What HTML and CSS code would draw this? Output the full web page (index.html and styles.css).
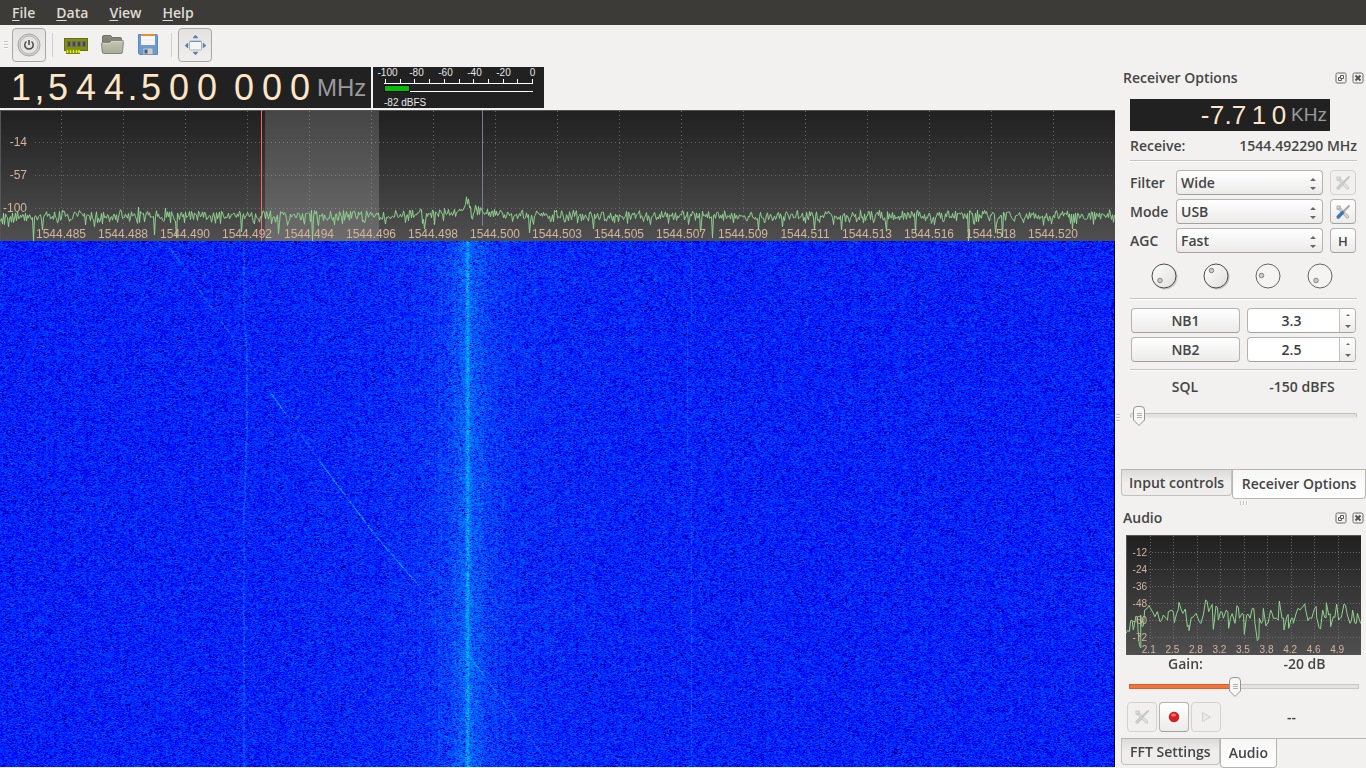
FILE: index.html
```html
<!DOCTYPE html>
<html lang="en">
<head>
<meta charset="utf-8">
<title>Receiver</title>
<link rel="stylesheet" href="styles.css">
</head>
<body>
<svg class="defs" aria-hidden="true">
  <symbol id="tools" viewBox="0 0 16 16">
    <path d="M3 3 L12.500 12.800" stroke="#a9aaa7" stroke-width="3.200" stroke-linecap="round"/>
    <path d="M3 3 L12.500 12.800" stroke="#dededb" stroke-width="1.600" stroke-linecap="round"/>
    <path d="M1.500 4.500 A3 3 0 0 0 5 5 A3 3 0 0 0 4.500 1.500" fill="none" stroke="#b3b5b1" stroke-width="1.600"/>
    <path d="M14 2 L7 9" stroke="#a7a9a5" stroke-width="2" stroke-linecap="round"/>
    <path d="M7.300 8.700 L3.200 13" stroke="currentColor" stroke-width="3.600" stroke-linecap="round"/>
  </symbol>
  <symbol id="float" viewBox="0 0 12 12">
    <rect x="1" y="1" width="10" height="10" rx="1.500" fill="none" stroke="#6b6963"/>
    <path d="M5.500 3.500 H8.500 V6.500 H5.500Z M5 5.500 H3.500 V8.500 H6.500 V7" fill="none" stroke="#5d5b56"/>
  </symbol>
  <symbol id="close" viewBox="0 0 12 12">
    <rect x="1" y="1" width="10" height="10" rx="1.500" fill="none" stroke="#6b6963"/>
    <path d="M3.500 3.500 L8.500 8.500 M8.500 3.500 L3.500 8.500" stroke="#55534e" stroke-width="2"/>
  </symbol>
  <linearGradient id="face" x1="0" y1="0" x2="1" y2="1"><stop offset="0" stop-color="#fff"/><stop offset="1" stop-color="#dfdedc"/></linearGradient>
  <linearGradient id="folderBack" x1="0" y1="0" x2="0" y2="1"><stop offset="0" stop-color="#8b8d7c"/><stop offset="1" stop-color="#6d705f"/></linearGradient>
  <linearGradient id="folderFront" x1="0" y1="0" x2="0" y2="1"><stop offset="0" stop-color="#c3c6b4"/><stop offset="1" stop-color="#a9ad98"/></linearGradient>
</svg>

<nav class="menubar" aria-label="Main menu">
  <button><u>F</u>ile</button><button><u>D</u>ata</button><button><u>V</u>iew</button><button><u>H</u>elp</button>
</nav>

<div class="toolbar" role="toolbar">
  <span class="grip"></span>
  <button class="tool framed" aria-label="Power">
    <svg width="24" height="24" viewBox="0 0 24 24"><circle cx="12" cy="12" r="11" fill="#d5d4d2" stroke="#a5a3a0"/><circle cx="12" cy="12" r="9" fill="#e5e4e2" stroke="#b5b3b0"/><path d="M9.500 8.500 A4.200 4.200 0 1 0 14.500 8.500" fill="none" stroke="#4c4c4c" stroke-width="1.500"/><path d="M12 7 V12" stroke="#4c4c4c" stroke-width="1.600"/></svg>
  </button>
  <span class="tool-sep"></span>
  <button class="tool" aria-label="Input device">
    <svg width="24" height="24" viewBox="0 0 24 24"><path d="M0 5 H24 V18 H16 V21 H2 V18 H0Z" fill="#77840d"/><path d="M0.500 5.500 H23.500 V17.500 H0.500Z" fill="#828e12" stroke="#65720a"/><g fill="#45454a" stroke="#68696c"><rect x="3.500" y="8.500" width="3" height="5"/><rect x="8.500" y="8.500" width="3" height="5"/><rect x="13.500" y="8.500" width="3" height="5"/><rect x="18.500" y="8.500" width="3" height="5"/></g><path d="M3.500 17 V20 M6.500 17 V20 M9.500 17 V20 M12.500 17 V20 M15 17 V20" stroke="#e6ee1a" stroke-width="1.700"/></svg>
  </button>
  <button class="tool" aria-label="Open">
    <svg width="24" height="24" viewBox="0 0 24 24"><path d="M2.500 19 V4 Q2.500 2.500 4 2.500 H10 Q11.500 2.500 12 4.500 H20.500 Q21.500 4.500 21.500 5.500 V19Z" fill="url(#folderBack)" stroke="#71746a"/><path d="M1.500 10.500 Q1.500 9.500 2.500 9.500 H9.500 L11.500 7.500 H22.500 Q23.500 7.500 23.400 8.500 L22.500 19 Q22.400 20.500 21 20.500 H4 Q2.500 20.500 2.300 19Z" fill="url(#folderFront)" stroke="#84877a"/><path d="M3 10.500 H10 L12 8.500 H22" fill="none" stroke="#d0d2c3"/></svg>
  </button>
  <button class="tool" aria-label="Save">
    <svg width="24" height="24" viewBox="0 0 24 24"><path d="M2.500 1.500 H20.500 Q21.500 1.500 21.500 2.500 V21.500 H3.500 L2.500 20.500Z" fill="#6b9bd2" stroke="#5c89c0"/><path d="M5 1 H19 V12 H5Z" fill="#f7f7f7"/><path d="M5 1 H19 V3 H5Z" fill="#ea8d35"/><path d="M5 7 H19 M5 10 H19" stroke="#ececec"/><path d="M7 15 H17 V21.500 H7Z" fill="#c9ccd1" stroke="#8a97a8"/><rect x="8.500" y="16.500" width="3" height="4" fill="#3c5f8e"/></svg>
  </button>
  <span class="tool-sep wide"></span>
  <button class="tool framed" aria-label="Full screen">
    <svg width="24" height="24" viewBox="0 0 24 24"><rect x="6.500" y="8" width="12" height="9" rx="1" fill="#f5f5f4" stroke="#b1b1ae"/><path d="M7 8.500 H18" stroke="#6c93c4"/><path d="M12.500 2 L15 5 H10Z M12.500 22 L15 19 H10Z M2 12.500 L5 10 V15Z M23 12.500 L20 10 V15Z" fill="#4f7fb8" stroke="#4676b0" stroke-width=".4"/></svg>
  </button>
</div>

<div class="workspace">
  <main class="viewer">
    <div class="readouts">
      <div class="frequency"><b>1</b><i>,</i><b>5</b><b>4</b><b>4</b><i>.</i><b>5</b><b>0</b><b>0</b><i></i><b>0</b><b>0</b><b>0</b><span class="unit">MHz</span></div>
      <div class="meter">
        <div class="meter-scale"><span>-100</span><span>-80</span><span>-60</span><span>-40</span><span>-20</span><span>0</span></div>
        <svg class="meter-bar" width="150" height="14" viewBox="0 0 150 14"><path d="M1.500 0 V5 M16.500 0 V4 M30.500 0 V5 M45.500 0 V4 M60.500 0 V5 M75.500 0 V4 M89.500 0 V5 M104.500 0 V4 M119.500 0 V5 M133.500 0 V4 M148.500 0 V5 M0 4.500 H149 M25 12.500 H149" stroke="#fff"/><rect x=".5" y="6.500" width="25" height="6" fill="#00bf00" stroke="#000"/></svg>
        <div class="meter-value">-82 dBFS</div>
      </div>
    </div>
    <section class="spectrum" aria-label="Spectrum">
      <canvas id="spectrum"></canvas>
      <div class="level-labels"><span>-14</span><span>-57</span><span>-100</span></div>
      <div class="freq-labels"><span>1544.485</span><span>1544.488</span><span>1544.490</span><span>1544.492</span><span>1544.494</span><span>1544.496</span><span>1544.498</span><span>1544.500</span><span>1544.503</span><span>1544.505</span><span>1544.507</span><span>1544.509</span><span>1544.511</span><span>1544.513</span><span>1544.516</span><span>1544.518</span><span>1544.520</span></div>
    </section>
    <section class="waterfall" aria-label="Waterfall"><canvas id="waterfall"></canvas></section>
  </main>
  <div class="splitter"><span class="grip"></span></div>
  <aside class="docks">
    <section class="dock receiver">
      <header class="dock-title"><h2>Receiver Options</h2><button aria-label="Float"><svg width="12" height="12"><use href="#float"/></svg></button><button aria-label="Close"><svg width="12" height="12"><use href="#close"/></svg></button></header>
      <div class="receiver-body">
        <div class="offset"><i class="minus">-</i><b>7</b><i>.</i><b>7</b><b>1</b><b>0</b><span class="unit">KHz</span></div>
        <div class="receive"><span>Receive:</span><span>1544.492290 MHz</span></div>
        <hr>
        <div class="options">
          <label for="filter">Filter</label><select id="filter"><option>Wide</option></select><button class="btn off" aria-label="Filter settings" disabled><svg width="16" height="16"><use href="#tools"/></svg></button>
          <label for="mode">Mode</label><select id="mode"><option>USB</option></select><button class="btn mode" aria-label="Mode settings"><svg width="16" height="16"><use href="#tools"/></svg></button>
          <label for="agc">AGC</label><select id="agc"><option>Fast</option></select><button class="btn hang">H</button>
        </div>
        <div class="dials">
          <svg width="28" height="28" viewBox="0 0 28 28"><circle cx="15" cy="15" r="12.500" fill="#c8c6c3"/><circle cx="14" cy="14" r="12" fill="url(#face)" stroke="#4b4a47"/><circle cx="10" cy="18.500" r="2.300" fill="#c8c8c6" stroke="#888784"/></svg>
          <svg width="28" height="28" viewBox="0 0 28 28"><circle cx="15" cy="15" r="12.500" fill="#c8c6c3"/><circle cx="14" cy="14" r="12" fill="url(#face)" stroke="#4b4a47"/><circle cx="9.500" cy="8.500" r="2.300" fill="#c8c8c6" stroke="#888784"/></svg>
          <svg width="28" height="28" viewBox="0 0 28 28"><circle cx="14" cy="14" r="12" fill="#f5f4f3" stroke="#666461"/><circle cx="7.500" cy="13.500" r="2.300" fill="#c8c8c6" stroke="#888784"/></svg>
          <svg width="28" height="28" viewBox="0 0 28 28"><circle cx="14" cy="14" r="12" fill="#f5f4f3" stroke="#666461"/><circle cx="10" cy="18.500" r="2.300" fill="#c8c8c6" stroke="#888784"/></svg>
        </div>
        <hr>
        <div class="blankers">
          <button class="btn">NB1</button><div class="spin"><input type="text" value="3.3" aria-label="NB1 threshold"><div class="steps"><button aria-label="NB1 up"></button><button class="down" aria-label="NB1 down"></button></div></div>
          <button class="btn">NB2</button><div class="spin"><input type="text" value="2.5" aria-label="NB2 threshold"><div class="steps"><button aria-label="NB2 up"></button><button class="down" aria-label="NB2 down"></button></div></div>
        </div>
        <hr>
        <div class="pair"><label for="squelch">SQL</label><span>-150 dBFS</span></div>
        <input class="slider squelch" id="squelch" type="range" min="-150" max="0" value="-149">
      </div>
    </section>
    <div class="tabs" role="tablist"><button role="tab">Input controls</button><button role="tab" class="current grow" aria-selected="true">Receiver Options</button></div>
    <div class="hsplit"><span></span></div>
    <section class="dock">
      <header class="dock-title"><h2>Audio</h2><button aria-label="Float"><svg width="12" height="12"><use href="#float"/></svg></button><button aria-label="Close"><svg width="12" height="12"><use href="#close"/></svg></button></header>
      <div class="audio-plot">
        <canvas id="audio"></canvas>
        <div class="audio-levels"><span>-12</span><span>-24</span><span>-36</span><span>-48</span><span>-60</span><span>-72</span></div>
        <div class="audio-freqs"><span>2.1</span><span>2.5</span><span>2.8</span><span>3.2</span><span>3.5</span><span>3.8</span><span>4.2</span><span>4.6</span><span>4.9</span></div>
      </div>
      <div class="pair gain-row"><label for="gain">Gain:</label><span>-20 dB</span></div>
      <input class="slider gain" id="gain" type="range" min="0" max="100" value="46">
      <div class="audio-actions">
        <button class="btn off" aria-label="Audio settings" disabled><svg width="16" height="16"><use href="#tools"/></svg></button>
        <button class="btn" aria-label="Record"><svg width="12" height="12" viewBox="0 0 12 12"><circle cx="6" cy="6" r="4.800" fill="#df1d21" stroke="#a90c10" stroke-width=".8"/><ellipse cx="5.500" cy="4" rx="2.500" ry="1.500" fill="#f17979"/></svg></button>
        <button class="btn off" aria-label="Play" disabled><svg width="12" height="12" viewBox="0 0 12 12"><path d="M2.500 1.500 L10.500 6 L2.500 10.500Z" fill="#e4e3e1" stroke="#bbb9b6"/></svg></button>
        <output>--</output>
      </div>
    </section>
    <div class="tabs bottom" role="tablist"><button role="tab">FFT Settings</button><button role="tab" class="current" aria-selected="true">Audio</button></div>
  </aside>
</div>
<script src="app.js"></script>
</body>
</html>
```
FILE: styles.css
```css
* { box-sizing: border-box; }
html, body { height: 100%; }
body {
  margin: 0; display: flex; flex-direction: column; overflow: hidden;
  background: #f2f1f0; color: #454545;
  font: 600 14px/20px "Open Sans", "Noto Sans", sans-serif;
}
button, input, select { font: inherit; color: inherit; margin: 0; }
button { padding: 0; border: 0; background: none; }
canvas, svg { display: block; }
.defs { position: absolute; width: 0; height: 0; }

.menubar { display: flex; gap: 21px; height: 25px; padding-left: 12px; align-items: center; background: #3c3b37; color: #dfdbd2; flex: none; }
.menubar u { text-underline-offset: 2px; text-decoration-thickness: 1px; }

.toolbar { display: flex; align-items: center; height: 42px; padding: 0 4px 2px; flex: none; }
.grip { width: 4px; height: 8px; background: repeating-linear-gradient(#c6c4c1 0 1px, #fff 1px 2px, transparent 2px 3px); }
.tool { width: 36px; height: 34px; display: grid; place-items: center; }
.tool.framed { width: 34px; margin-left: 4px; border: 1px solid #a9a7a3; border-radius: 4px; background: linear-gradient(#e3e2e0, #f0efee); }
.tool-sep { width: 1px; height: 24px; margin: 0 5px 0 6px; background: #d3d1ce; }
.tool-sep.wide { margin: 0 2px 0 5px; }

.workspace { display: flex; flex: 1; min-height: 0; }
.viewer { flex: 1; min-width: 0; display: flex; flex-direction: column; padding-bottom: 1px; }
.readouts { display: flex; gap: 2px; height: 41px; margin-bottom: 2px; flex: none; font-family: "Liberation Sans", sans-serif; font-weight: 400; }
.frequency { display: flex; align-items: center; width: 371px; padding-left: 7px; background: #212121; color: #ffe6c8; font-size: 36px; line-height: 41px; }
.frequency b, .frequency i, .offset b, .offset i { font-weight: 400; font-style: normal; display: flex; justify-content: center; }
.frequency b { width: 28px; }
.frequency i { width: 9px; }
.unit { color: #9a9a9d; }
.frequency .unit { font-size: 24px; margin-left: 3px; line-height: 38px; }
.meter { width: 171px; background: #212121; color: #e6e6e6; font-size: 10px; line-height: 12px; }
.meter-scale { display: grid; grid-template-columns: repeat(6, 29px); justify-items: center; height: 12px; }
.meter-bar { margin-left: 11px; }
.meter-value { margin-left: 11px; line-height: 19px; }

.spectrum { display: grid; height: 131px; flex: none; font: 12px/14px "Liberation Sans", sans-serif; color: #d2b4a0; }
.spectrum > * { grid-area: 1 / 1; min-width: 0; min-height: 0; }
.spectrum canvas { width: 100%; height: 131px; }
.level-labels { display: grid; grid-auto-rows: 33px; width: 27px; padding-top: 16px; text-align: right; line-height: 33px; justify-content: end; justify-items: end; }
.freq-labels { align-self: end; display: grid; grid-template-columns: repeat(17, 1fr); justify-items: center; padding: 0 31px 0 30px; }
.waterfall { flex: 1; min-height: 0; border-right: 1px solid #000; background: #0022ff; }
.waterfall canvas { width: 100%; height: 100%; }

.splitter { width: 6px; flex: none; display: grid; place-items: center; }
.docks { width: 245px; flex: none; display: flex; flex-direction: column; }
.receiver { flex: 1; min-height: 0; }
.dock-title { display: flex; align-items: center; gap: 5px; height: 22px; padding: 0 2px; }
.dock-title h2 { flex: 1; margin: 0; font: inherit; }
.receiver-body { padding: 10px 9px 0; }
.offset { display: flex; align-items: center; justify-content: flex-end; width: 200px; height: 32px; padding-right: 3px; background: #212121; color: #ffe6c8; font: 26px/32px "Liberation Sans", sans-serif; }
.offset b { width: 20px; }
.offset i { width: 2px; }
.offset .minus { width: 4px; }
.offset .unit { font-size: 19px; margin-left: 2px; line-height: 30px; }
.receive { display: flex; justify-content: space-between; line-height: 29px; }
hr { margin: 0; border: 0; height: 2px; border-top: 1px solid #c6c4c1; border-bottom: 1px solid #fff; }
.options { display: grid; grid-template-columns: 39px 1fr 26px; gap: 4px 7px; align-items: center; padding-top: 8px; margin-right: 1px; }
select, .btn, .spin { height: 25px; border: 1px solid #b5b3af; border-bottom-color: #a3a19d; border-radius: 4px; background: linear-gradient(#fff, #ecebea); }
select { appearance: none; width: 147px; padding: 0 4px; background: url("data:image/svg+xml,%3Csvg xmlns='http://www.w3.org/2000/svg' width='8' height='14'%3E%3Cpath d='M1 4L4 1L7 4ZM1 10L4 13L7 10Z' fill='%23666'/%3E%3C/svg%3E") no-repeat right 5px bottom 3px, linear-gradient(#fff, #ecebea); }
.options select { justify-self: end; }
.btn { display: grid; place-items: center; color: #454545; }
.btn.off { background: #f1f0ef; border-color: #d4d2cf; color: #b5b5b2; }
.btn.off svg { opacity: .6; }
.btn.mode { color: #4377b4; }
.hang { font-size: 13px; }
.dials { display: flex; gap: 24px; padding: 9px 0 8px 20px; }
.blankers { display: grid; grid-template-columns: 1fr 1fr; gap: 4px 7px; padding: 8px 1px 7px; }
.spin { display: flex; background: #fff; overflow: hidden; }
.spin input { flex: 1; min-width: 0; border: 0; padding: 0 4px 0 0; background: none; text-align: center; color: #3c3c3c; }
.steps { width: 16px; border-left: 1px solid #c4c2be; display: grid; grid-template-rows: 1fr 1fr; background: linear-gradient(#fff, #ecebea); }
.steps button { display: grid; place-items: center; }
.steps button::before { content: ""; border: 2px solid transparent; border-top: 0; border-bottom-color: #666; }
.steps .down::before { border: 3px solid transparent; border-top-color: #666; border-bottom: 0; }
.pair { display: grid; grid-template-columns: 1fr 1fr; justify-items: center; line-height: 20px; }
.receiver .pair { grid-template-columns: 110px 1fr; column-gap: 7px; padding-top: 6px; }
.slider { appearance: none; display: block; height: 22px; background: none; }
.slider::-webkit-slider-runnable-track { height: 5px; border: 1px solid #c1bfbb; border-bottom-color: #e7e6e4; border-radius: 2px; background: #e3e2df; }
.slider::-webkit-slider-thumb { appearance: none; width: 14px; height: 22px; margin-top: -9px; background: url("data:image/svg+xml,%3Csvg xmlns='http://www.w3.org/2000/svg' width='14' height='22'%3E%3Cpath d='M1.500 5Q1.500 1.500 5 1.500H9Q12.500 1.500 12.500 5V15L7 20.500L1.500 15Z' fill='%23f7f7f6' stroke='%23969490'/%3E%3Cpath d='M5 8.500H10M5 10.500H10M5 12.500H10' stroke='%23b4b2af'/%3E%3C/svg%3E"); }
.squelch { width: 100%; margin-top: 7px; }
.tabs { display: flex; align-items: flex-start; height: 30px; flex: none; border-top: 1px solid #b7b5b1; }
.tabs button { height: 26px; padding: 0 7px; border: 1px solid #c3c1bd; border-top: 0; border-radius: 0 0 4px 4px; background: linear-gradient(#dddbd9, #efeeed 50%); white-space: nowrap; }
.tabs .current { height: 29px; border-color: #b7b5b1; background: linear-gradient(#f6f6f5, #fff); }
.tabs .grow { flex: 1; }
.tabs.bottom button { padding: 0 8px; }
.hsplit { height: 8px; display: grid; place-items: center; }
.hsplit span { width: 8px; height: 4px; background: repeating-linear-gradient(90deg, #c6c4c1 0 1px, #fff 1px 2px, transparent 2px 3px); }
.audio-plot { display: grid; height: 120px; margin: 6px 5px 0; font: 10px/12px "Liberation Sans", sans-serif; color: #d2b4a0; }
.audio-plot > * { grid-area: 1 / 1; min-width: 0; min-height: 0; }
.audio-plot canvas { width: 100%; height: 120px; }
.audio-levels { display: grid; grid-auto-rows: 17px; align-content: start; justify-items: end; width: 21px; padding-top: 9px; line-height: 17px; }
.audio-freqs { align-self: end; display: grid; grid-template-columns: repeat(9, 1fr); justify-items: center; padding: 0 12px 0 11px; line-height: 10px; }
.gain-row { margin: 0 2px 0 5px; line-height: 18px; }
.gain { width: 230px; margin: 2px 0 0 8px; }
.gain::-webkit-slider-runnable-track { background: linear-gradient(90deg, #f0743c 46%, #e3e2df 46%); border-image: linear-gradient(90deg, #d9612c 46%, #c9c7c3 46%) 1; }
.audio-actions { display: grid; grid-template-columns: 30px 30px 30px 1fr; gap: 2px; padding: 5px 6px 6px; align-items: center; }
.audio-actions .btn { height: 30px; }
.audio-actions output { text-align: center; }
```
FILE: app.js
```js
let seed = 7;
function random() {
  seed = (seed * 1664525 + 1013904223) >>> 0;
  return seed / 4294967296;
}
function open(id) {
  const canvas = document.getElementById(id);
  canvas.width = canvas.clientWidth;
  canvas.height = canvas.clientHeight;
  return [canvas.getContext("2d"), canvas.width, canvas.height];
}
function backdrop(g, w, h) {
  const fade = g.createLinearGradient(0, 0, 0, h);
  fade.addColorStop(0, "#202020");
  fade.addColorStop(1, "#4f4f4f");
  g.fillStyle = fade;
  g.fillRect(0, 0, w, h);
  g.strokeStyle = "#555";
  g.strokeRect(0.5, 0.5, w, h);
}
function line(g, x1, y1, x2, y2) {
  g.beginPath();
  g.moveTo(x1, y1);
  g.lineTo(x2, y2);
  g.stroke();
}

function drawSpectrum() {
  const [g, w, h] = open("spectrum");
  const s = w / 1115;
  backdrop(g, w, h);
  g.strokeStyle = "#6a6a6a";
  g.setLineDash([1, 3]);
  for (let i = 0; i < 17; i++) {
    const x = Math.round((61 + 62 * i) * s) + 0.5;
    line(g, x, 1, x, h - 16);
  }
  for (const y of [32.5, 65.5, 98.5]) line(g, 35, y, w, y);
  g.setLineDash([]);
  g.fillStyle = "rgba(255,255,255,.17)";
  g.fillRect(265 * s, 1, 114 * s, h);
  g.strokeStyle = "#f36a64";
  line(g, 261.5 * s, 0, 261.5 * s, h);
  g.strokeStyle = "#758098";
  line(g, 482.5 * s, 0, 482.5 * s, h - 15);
  const dips = { 8: 117, 33: 131, 42: 120, 154: 125, 176: 128, 241: 122, 278: 124, 312: 131, 424: 119, 529: 123, 593: 119, 700: 122, 712: 128, 758: 120, 814: 120, 841: 120, 886: 121, 915: 123, 968: 131, 995: 123, 1002: 127, 1072: 119, 138: 97, 165: 98 };
  g.strokeStyle = "#91d291";
  g.beginPath();
  for (let x = 0; x < 1115; x++) {
    const dip = Math.log(1 / (random() + 0.06)) - 0.8;
    let y = 106.5 + dip * 3.4 + (random() - 0.5) * 8;
    const d = Math.abs(x - 467);
    y -= 8 * Math.exp(-d / 25) + 8 * Math.exp(-d * d / 4);
    if (dips[x]) y = dips[x];
    g.lineTo((x + 0.5) * s, y);
  }
  g.stroke();
}

function drawAudio() {
  const [g, w, h] = open("audio");
  backdrop(g, w, h);
  g.strokeStyle = "#6a6a6a";
  g.setLineDash([1, 2]);
  for (let i = 0; i < 9; i++) {
    const x = Math.round(w * 0.1 * (i + 1)) + 0.5;
    line(g, x, 1, x, h - 13);
  }
  for (let i = 1; i < 7; i++) line(g, 23, 17 * i + 0.5, w, 17 * i + 0.5);
  g.setLineDash([]);
  const trace = [48,310,58,305,62,272,70,300,78,258,84,300,88,345,92,255,96,290,104,240,112,235,120,232,130,250,142,245,150,275,160,255,168,265,175,245,186,240,193,278,200,250,207,217,214,240,226,237,232,290,237,302,244,262,258,250,268,275,280,255,287,210,296,245,302,232,310,298,318,228,325,270,332,245,340,265,349,240,356,295,362,262,375,280,381,227,388,265,396,250,403,313,410,255,420,265,427,235,435,280,442,332,448,265,454,280,460,235,468,288,474,280,482,240,490,265,500,265,508,213,516,265,522,300,530,262,536,295,544,265,550,280,560,245,570,240,580,228,586,235,594,272,605,265,614,235,620,262,627,292,638,240,644,262,649,218,656,255,662,290,670,260,680,222,686,270,694,262,702,222,712,255,720,280,728,240,735,280,742,250,752,280];
  g.strokeStyle = "#91d291";
  g.beginPath();
  for (let i = 0; i < trace.length; i += 2) {
    const x = (trace[i] - 48) / 705 * w;
    const y = (trace[i + 1] - 15) / 3;
    g.lineTo(x, y);
    if (i % 4 === 0) g.lineTo(x + 1.5, y + (random() - 0.5) * 8);
  }
  g.stroke();
}

function trackX(points, y) {
  for (let i = 1; i < points.length; i++) {
    const [x0, y0] = points[i - 1];
    const [x1, y1] = points[i];
    if (y <= y1) return x0 + (x1 - x0) * (y - y0) / (y1 - y0);
  }
  return points[points.length - 1][0];
}

function driftLevel(y) {
  if (y < 130) return y % 40 < 28 ? 34 : 8;
  if (y < 150) return 0;
  if (y < 175) return 65;
  if (y < 220) return 22;
  if (y < 345) return y % 37 < 31 ? 68 : 35;
  return y < 410 ? 5 : 32;
}

function drawWaterfall() {
  const [g, w, h] = open("waterfall");
  const image = g.createImageData(w, h);
  const drift = [[165, 0], [245, 115], [275, 158], [320, 221], [375, 294], [418, 344], [467, 412], [552, 527]];
  const carrier = [[243, 0], [244, 80], [247, 120], [246, 200], [243, 290], [244, 527]];
  const columns = Array.from({ length: w }, (_, x) => {
    const d = Math.abs(x * 1114 / w - 467);
    return 50 * Math.exp(-d * d / 3) + 48 * Math.exp(-d / 20) + 14 * Math.exp(-d / 120) + (random() - 0.5) * (d < 60 ? 18 : 7);
  });
  for (let y = 0; y < h; y++) {
    const py = y * 526 / h;
    const driftX = trackX(drift, py);
    const carrierX = trackX(carrier, py);
    const sideX = py > 80 && py < 220 ? 687 : 691;
    const strong = driftLevel(py);
    const flutter = random() * 10 - 5;
    let previous = 0;
    for (let x = 0; x < w; x++) {
      const px = x * 1114 / w;
      const raw = 25 * Math.log(-Math.log(random() * 0.9999 + 0.00005)) + 14;
      const noise = raw * 0.82 + previous * 0.35;
      previous = raw;
      let v = 25 + noise + columns[x] + flutter * 0.4;
      if (Math.abs(px - driftX) < 1) v += strong;
      if (Math.abs(px - carrierX) < 1) v += 34;
      if (Math.abs(px - sideX) < 1) v += 30;
      const at = (y * w + x) * 4;
      image.data[at + 1] = Math.max(0, Math.min(255, v * 1.15));
      image.data[at + 2] = v < 0 ? Math.max(0, 255 + v * 2.3) : 255;
      image.data[at + 3] = 255;
    }
  }
  g.putImageData(image, 0, 0);
}

drawSpectrum();
drawAudio();
drawWaterfall();
```
